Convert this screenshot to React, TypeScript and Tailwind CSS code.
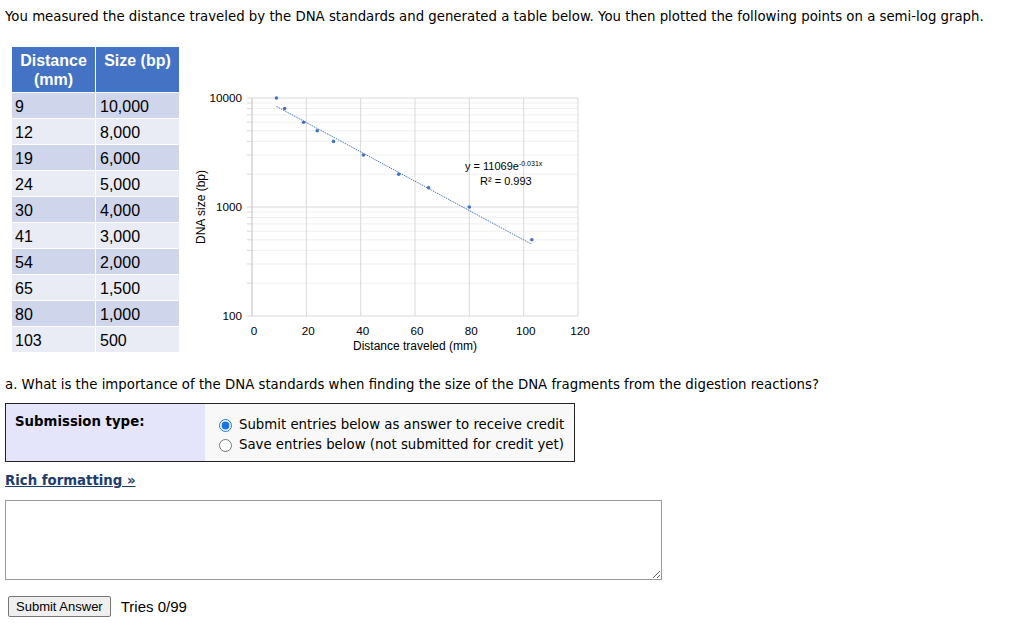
const rows: [string, string][] = [
  ['9', '10,000'],
  ['12', '8,000'],
  ['19', '6,000'],
  ['24', '5,000'],
  ['30', '4,000'],
  ['41', '3,000'],
  ['54', '2,000'],
  ['65', '1,500'],
  ['80', '1,000'],
  ['103', '500'],
];

// chart mapping (local svg coords)
const X0 = 62;
const XS = 326 / 120;
const px = (d: number) => X0 + d * XS;
const py = (v: number) => 231 - (Math.log10(v) - 2) * 109;

function StandardsTable() {
  return (
    <div className="w-[167px] grid grid-cols-2 gap-x-[1px] gap-y-[1px] bg-white font-['Liberation_Sans',Arial,sans-serif] text-[16px] leading-[19px]">
      <div className="bg-[#4472c4] h-[45px] pt-[4px] text-center font-bold text-white">
        Distance
        <br />
        (mm)
      </div>
      <div className="bg-[#4472c4] h-[45px] pt-[4px] text-center font-bold text-white">Size (bp)</div>
      {rows.map(([d, s], i) => (
        <div key={d} className="contents">
          <div className={`h-[25px] pl-[3px] pt-[4px] text-black ${i % 2 === 0 ? 'bg-[#cfd5ea]' : 'bg-[#e9ebf5]'}`}>{d}</div>
          <div className={`h-[25px] pl-[4px] pt-[4px] text-black ${i % 2 === 0 ? 'bg-[#cfd5ea]' : 'bg-[#e9ebf5]'}`}>{s}</div>
        </div>
      ))}
    </div>
  );
}

function SemiLogChart() {
  const pts: [number, number][] = rows.map(([d, s]) => [Number(d), Number(s.replace(',', ''))]);
  const minor: number[] = [];
  for (const dec of [100, 1000]) for (let k = 2; k <= 9; k++) minor.push(dec * k);
  const fit = (x: number) => 11069 * Math.exp(-0.031 * x);

  return (
    <svg width="410" height="275" viewBox="0 0 410 275" className="mt-[38px] ml-[11px] font-['Liberation_Sans',Arial,sans-serif]">
      {minor.map((v) => (
        <g key={v}>
          <line x1={X0} x2={px(120)} y1={py(v)} y2={py(v)} stroke="#efefef" strokeWidth="1" />
          <line x1={X0 - 5} x2={X0} y1={py(v)} y2={py(v)} stroke="#d9d9d9" strokeWidth="1" />
        </g>
      ))}
      {[10000, 1000, 100].map((v) => (
        <g key={v}>
          <line x1={X0 - 5} x2={px(120)} y1={py(v)} y2={py(v)} stroke="#d9d9d9" strokeWidth="1" />
          <text x={X0 - 10} y={py(v) + 4} textAnchor="end" fontSize="11.7" fill="#000">
            {v}
          </text>
        </g>
      ))}
      {[0, 20, 40, 60, 80, 100, 120].map((d) => (
        <g key={d}>
          <line x1={px(d)} x2={px(d)} y1={py(10000)} y2={py(100)} stroke={d === 0 ? '#bfbfbf' : '#d9d9d9'} strokeWidth="1" />
          <text x={px(d) + 2} y={py(100) + 19} textAnchor="middle" fontSize="11.7" fill="#000">
            {d}
          </text>
        </g>
      ))}
      <line
        x1={px(9)}
        y1={py(fit(9))}
        x2={px(103)}
        y2={py(fit(103))}
        stroke="#4472c4"
        strokeWidth="1"
        strokeDasharray="1.5 1"
      />
      {pts.map(([d, s]) => (
        <circle key={d} cx={px(d)} cy={py(s)} r="1.8" fill="#4472c4" />
      ))}
      <text x="275" y="85" fontSize="11" fill="#000">
        y = 11069e
        <tspan fontSize="7" dy="-4">-0.031x</tspan>
      </text>
      <text x="290" y="100" fontSize="11" fill="#000">
        R² = 0.993
      </text>
      <text x="225" y="265" textAnchor="middle" fontSize="12" fill="#000">
        Distance traveled (mm)
      </text>
      <text x="15" y="122" textAnchor="middle" fontSize="12" fill="#000" transform="rotate(-90 15 122)">
        DNA size (bp)
      </text>
    </svg>
  );
}

export default function App() {
  return (
    <div className="bg-white min-h-[631px] px-[5px] pt-[8px] text-[13.3px] leading-[18px] text-black font-['DejaVu_Sans',Verdana,sans-serif]">
      <p>
        You measured the distance traveled by the DNA standards and generated a table below. You then plotted the following
        points on a semi-log graph.
      </p>

      <div className="flex items-start mt-[21px] pl-[7px]">
        <StandardsTable />
        <SemiLogChart />
      </div>

      <p className="mt-[16px]">a. What is the importance of the DNA standards when finding the size of the DNA fragments from the digestion reactions?</p>

      <div className="mt-[9px] w-[570px] h-[59px] border border-[#222] flex">
        <div className="w-[199px] bg-[#e4e4fa] pl-[9px] pt-[9px] font-bold">Submission type:</div>
        <div className="flex-1 bg-[#f8f8f8] pl-[14px] pt-[12px] flex flex-col gap-[2px]">
          <label className="flex items-center gap-[7px]">
            <input type="radio" name="sub" defaultChecked className="w-[13px] h-[13px] m-0 accent-[#1a73e8]" />
            Submit entries below as answer to receive credit
          </label>
          <label className="flex items-center gap-[7px]">
            <input type="radio" name="sub" className="w-[13px] h-[13px] m-0" />
            Save entries below (not submitted for credit yet)
          </label>
        </div>
      </div>

      <a href="#" className="inline-block mt-[10px] font-bold text-[#1c3d6e] underline">
        Rich formatting »
      </a>

      <textarea className="block mt-[10px] w-[657px] h-[80px] border border-[#999] bg-white resize" />

      <div className="mt-[16px] ml-[3px] flex items-center gap-[10px] font-['Liberation_Sans',Arial,sans-serif]">
        <button className="h-[21px] px-[7px] text-[13px] bg-[#efefef] border border-[#767676] rounded-[2px]">Submit Answer</button>
        <span className="text-[15px]">Tries 0/99</span>
      </div>
    </div>
  );
}
